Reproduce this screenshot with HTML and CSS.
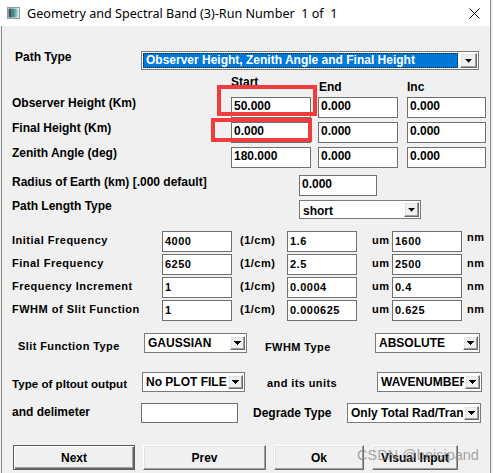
FILE: index.html
```html
<!DOCTYPE html>
<html>
<head>
<meta charset="utf-8">
<link rel="stylesheet" href="styles.css">
</head>
<body>
<div class="window">
  <div class="titlebar">
    <svg class="app-icon" width="13" height="12" viewBox="0 0 13 12">
      <defs>
        <linearGradient id="ig" x1="0" x2="1" y1="0" y2="0">
          <stop offset="0" stop-color="#2e6b6b"/>
          <stop offset="0.5" stop-color="#5aa7a7"/>
          <stop offset="1" stop-color="#cfe9f0"/>
        </linearGradient>
      </defs>
      <rect x="0.5" y="0.5" width="12" height="11" fill="#eef4f4" stroke="#8c9a9a"/>
      <rect x="1.5" y="1.5" width="3" height="9" fill="#3b4f55"/>
      <rect x="4.5" y="1.5" width="7" height="9" fill="url(#ig)"/>
    </svg>
    <span class="title">Geometry and Spectral Band (3)-Run Number  1 of  1</span>
    <svg class="close" width="11" height="11" viewBox="0 0 11 11">
      <path d="M0.5 0.5L10.5 10.5M10.5 0.5L0.5 10.5" stroke="#000" stroke-width="1" fill="none"/>
    </svg>
  </div>

  <div class="client">
    <div class="row row-path">
      <span class="label lbl-path">Path Type</span>
      <div class="combo combo-path">
        <span class="combo-sel">Observer Height, Zenith Angle and Final Height</span>
        <span class="drop"></span>
      </div>
    </div>

    <div class="row row-head">
      <span class="head head-start">Start</span>
      <span class="head">End</span>
      <span class="head">Inc</span>
    </div>

    <div class="row row-triple first">
      <span class="label lbl-triple">Observer Height (Km)</span>
      <div class="edit e-start">50.000</div>
      <div class="edit e-end">0.000</div>
      <div class="edit e-inc">0.000</div>
    </div>
    <div class="row row-triple">
      <span class="label lbl-triple">Final Height (Km)</span>
      <div class="edit e-start">0.000</div>
      <div class="edit e-end">0.000</div>
      <div class="edit e-inc">0.000</div>
    </div>
    <div class="row row-triple">
      <span class="label lbl-triple">Zenith Angle (deg)</span>
      <div class="edit e-start">180.000</div>
      <div class="edit e-end">0.000</div>
      <div class="edit e-inc">0.000</div>
    </div>

    <div class="row row-radius">
      <span class="label lbl-wide">Radius of Earth (km) [.000 default]</span>
      <div class="edit e-radius">0.000</div>
    </div>
    <div class="row row-pathlen">
      <span class="label lbl-wide lbl-up">Path Length Type</span>
      <div class="combo combo-short">
        <span class="combo-text">short</span>
        <span class="drop"></span>
      </div>
    </div>

    <div class="row row-freq first">
      <span class="label lbl-freq">Initial Frequency</span>
      <div class="edit e-freq">4000</div>
      <span class="label unit-cm">(1/cm)</span>
      <div class="edit e-freq">1.6</div>
      <span class="label unit-um">um</span>
      <div class="edit e-freq">1600</div>
      <span class="label unit-nm raised">nm</span>
    </div>
    <div class="row row-freq">
      <span class="label lbl-freq">Final Frequency</span>
      <div class="edit e-freq">6250</div>
      <span class="label unit-cm">(1/cm)</span>
      <div class="edit e-freq">2.5</div>
      <span class="label unit-um">um</span>
      <div class="edit e-freq">2500</div>
      <span class="label unit-nm">nm</span>
    </div>
    <div class="row row-freq">
      <span class="label lbl-freq">Frequency Increment</span>
      <div class="edit e-freq">1</div>
      <span class="label unit-cm">(1/cm)</span>
      <div class="edit e-freq">0.0004</div>
      <span class="label unit-um">um</span>
      <div class="edit e-freq">0.4</div>
      <span class="label unit-nm">nm</span>
    </div>
    <div class="row row-freq">
      <span class="label lbl-freq">FWHM of Slit Function</span>
      <div class="edit e-freq">1</div>
      <span class="label unit-cm">(1/cm)</span>
      <div class="edit e-freq">0.000625</div>
      <span class="label unit-um">um</span>
      <div class="edit e-freq">0.625</div>
      <span class="label unit-nm">nm</span>
    </div>

    <div class="row row-slit">
      <span class="label lbl-slit">Slit Function Type</span>
      <div class="combo combo-mid">
        <span class="combo-text">GAUSSIAN</span>
        <span class="drop"></span>
      </div>
      <span class="label lbl-fwhm">FWHM Type</span>
      <div class="combo combo-right">
        <span class="combo-text">ABSOLUTE</span>
        <span class="drop"></span>
      </div>
    </div>

    <div class="row row-plot">
      <span class="label lbl-plot">Type of pltout output</span>
      <div class="combo combo-mid">
        <span class="combo-text">No PLOT FILE</span>
        <span class="drop"></span>
      </div>
      <span class="label lbl-units">and its units</span>
      <div class="combo combo-right">
        <span class="combo-text">WAVENUMBER</span>
        <span class="drop"></span>
      </div>
    </div>

    <div class="row row-delim">
      <span class="label lbl-delim">and delimeter</span>
      <div class="edit e-delim"></div>
      <span class="label lbl-degrade">Degrade Type</span>
      <div class="combo combo-degrade">
        <span class="combo-text">Only Total Rad/Trans</span>
        <span class="drop"></span>
      </div>
    </div>

    <div class="row row-buttons">
      <div class="btn btn-default btn-next">Next</div>
      <div class="btn btn-prev">Prev</div>
      <div class="btn btn-ok">Ok</div>
      <div class="btn btn-visual">Visual Input</div>
    </div>
  </div>

  <div class="mark mark-1"></div>
  <div class="mark mark-2"></div>
  <div class="watermark">CSDN @beisipand</div>
</div>
</body>
</html>
```
FILE: styles.css
```css
* { box-sizing: border-box; }

body {
  margin: 0;
  background: #f0f0f0;
  font-family: "Liberation Sans", Arial, sans-serif;
}

.window {
  position: relative;
  width: 491px;
  height: 473px;
  border-right: 1px solid #8a8a8a;
  background: #f0f0f0;
  overflow: hidden;
}

.titlebar {
  height: 26px;
  background: #fff;
  display: flex;
  align-items: center;
  padding-left: 7px;
}
.app-icon { flex: none; margin-right: 7px; }
.title {
  font-family: "Noto Sans", sans-serif;
  font-size: 12.6px;
  white-space: pre;
  color: #000;
}
.close { flex: none; margin-left: auto; margin-right: 10px; }

.client {
  margin-left: 1px;
  border-left: 1px solid #8c8c8c;
  height: 447px;
  display: flex;
  flex-direction: column;
  font-weight: bold;
  font-size: 12px;
  color: #000;
}

.row {
  display: flex;
  align-items: flex-start;
  padding-left: 10px;
  flex: none;
}

.label {
  flex: none;
  line-height: 14px;
  white-space: nowrap;
}

/* edit boxes */
.edit {
  flex: none;
  height: 21px;
  border: 1px solid #707070;
  background: #fff;
  padding: 1px 2px 0;
  line-height: 14px;
  white-space: nowrap;
  overflow: hidden;
}

/* combo boxes */
.combo {
  flex: none;
  display: flex;
  border: 1px solid #7a7a7a;
  background: #fff;
  padding: 1px;
}
.combo-text {
  flex: 1;
  min-width: 0;
  overflow: hidden;
  white-space: nowrap;
  line-height: 14px;
  padding: 1px 0 0 2px;
}
.drop {
  flex: none;
  position: relative;
  width: 16px;
  margin-left: 1px;
  background: #f0f0f0;
  border: 1px solid;
  border-color: #fff #696969 #696969 #fff;
  box-shadow: inset -1px -1px #a0a0a0, inset 1px 1px #e3e3e3;
  display: flex;
  align-items: center;
  justify-content: center;
}
.drop::after {
  content: "";
  width: 7px;
  height: 4px;
  background: #000;
  clip-path: polygon(0 0, 7px 0, 7px 1px, 6px 1px, 6px 2px, 5px 2px, 5px 3px, 4px 3px, 4px 4px, 3px 4px, 3px 3px, 2px 3px, 2px 2px, 1px 2px, 1px 1px, 0 1px);
}

/* path type */
.row-path { margin-top: 25px; height: 19px; }
.lbl-path { margin-left: 3px; width: 126px; margin-top: -1px; }
.combo-path { width: 338px; height: 19px; }
.combo-sel {
  flex: 1;
  min-width: 0;
  height: 15px;
  background: #0078d7;
  color: #fff;
  border: 1px dotted #1a1a1a;
  line-height: 13px;
  padding-left: 2px;
  white-space: nowrap;
  overflow: hidden;
}
.combo-path .drop { margin-left: 2px; width: 17px; }

/* column headers */
.row-head { margin-top: 10px; height: 14px; }
.head { width: 88px; line-height: 14px; flex: none; }
.head-start { margin-left: 219px; margin-top: -5px; }

/* start/end/inc rows */
.row-triple { margin-top: 4px; height: 21px; }
.row-triple.first { margin-top: 3px; }
.lbl-triple { width: 219px; margin-top: -1px; }
.e-start { width: 80px; margin-right: 7px; }
.e-end { width: 80px; margin-right: 9px; }
.e-inc { width: 79px; }

/* radius / path length */
.row-radius { margin-top: 7px; height: 21px; }
.lbl-wide { width: 287px; }
.lbl-up { margin-top: -1px; }
.e-radius { width: 78px; }
.row-pathlen { margin-top: 4px; height: 19px; }
.combo-short { width: 122px; height: 19px; }
.combo-short .combo-text { padding-top: 2px; }
.combo-short .drop { width: 15px; }

/* frequency rows */
.row-freq {
  margin-top: 2px;
  height: 21px;
  font-size: 11px;
  letter-spacing: 0.5px;
}
.row-freq.first { margin-top: 12px; }
.row-freq .label { margin-top: 2px; }
.lbl-freq { width: 150px; }
.e-freq { width: 70px; padding-top: 2px; }
.unit-cm { margin-left: 8px; width: 47px; }
.unit-um { margin-left: 15px; width: 20px; }
.unit-nm { margin-left: 5px; }
.row-freq .unit-nm.raised { margin-top: -1px; }

/* slit row */
.row-slit { margin-top: 12px; height: 20px; }
.lbl-slit {
  margin-left: 6px;
  width: 126px;
  margin-top: 6px;
  font-size: 11px;
  letter-spacing: 0.4px;
}
.lbl-fwhm {
  margin-left: 18px;
  width: 110px;
  margin-top: 7px;
  font-size: 11px;
  letter-spacing: 0.4px;
}
.combo-mid { width: 103px; height: 20px; }
.combo-right { width: 105px; height: 20px; }
.combo-mid .drop, .combo-right .drop { width: 15px; margin-top: 1px; margin-bottom: 1px; }

/* plot row */
.row-plot { margin-top: 19px; height: 20px; }
.lbl-plot { width: 130px; margin-top: 5px; font-size: 11.6px; }
.lbl-units { margin-left: 22px; width: 110px; margin-top: 4px; font-size: 11px; letter-spacing: 0.4px; }

/* delimiter row */
.row-delim { margin-top: 11px; height: 20px; }
.lbl-delim { width: 129px; margin-top: 2px; }
.e-delim { width: 97px; height: 20px; }
.lbl-degrade { margin-left: 15px; width: 94px; margin-top: 3px; }
.combo-degrade { width: 134px; height: 20px; }
.combo-degrade .drop { width: 15px; margin-top: 1px; margin-bottom: 1px; }

/* buttons */
.row-buttons { margin-top: 22px; height: 25px; padding-left: 11px; }
.btn {
  flex: none;
  height: 25px;
  display: flex;
  align-items: center;
  justify-content: center;
  background: #f0f0f0;
  border: 1px solid;
  border-color: #fff #696969 #696969 #fff;
  box-shadow: inset -1px -1px #a0a0a0, inset 1px 1px #e3e3e3;
  font-size: 12px;
  font-weight: bold;
  margin-right: 8px;
}
.btn-default {
  border-color: #5a5a5a;
  box-shadow: inset 1px 1px #fff, inset -1px -1px #696969, inset -2px -2px #a0a0a0;
}
.btn-next { width: 122px; }
.btn-prev { width: 123px; }
.btn-ok { width: 90px; }
.btn-visual { width: 86px; }

/* annotation overlays */
.mark {
  position: absolute;
  border: 4px solid #f03c3c;
}
.mark-1 { left: 217px; top: 85px; width: 100px; height: 31px; }
.mark-2 { left: 211px; top: 118px; width: 101px; height: 24px; }

.watermark {
  position: absolute;
  left: 357px;
  top: 446px;
  font-family: "Liberation Sans", Arial, sans-serif;
  font-size: 14.5px;
  line-height: 18px;
  color: rgba(130, 130, 130, 0.7);
  white-space: nowrap;
}
```
